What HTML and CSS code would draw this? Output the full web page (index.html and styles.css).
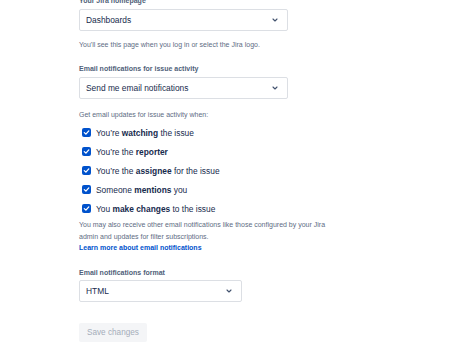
FILE: index.html
```html
<!DOCTYPE html>
<html lang="en">
<head>
    <meta charset="UTF-8">
    <title>Email preferences</title>
    <link rel="stylesheet" href="styles.css">
</head>
<body>
    <div class="form">
        <div class="field">
            <label class="field-label">Your Jira homepage</label>
            <div class="select select-wide">
                <span>Dashboards</span>
                <svg class="chevron" width="6" height="4" viewBox="0 0 6 4"><path d="M1 1 L3 3 L5 1" fill="none" stroke="#42526E" stroke-width="1.1" stroke-linecap="round" stroke-linejoin="round"/></svg>
            </div>
            <p class="helper">You'll see this page when you log in or select the Jira logo.</p>
        </div>

        <div class="field field-gap">
            <label class="field-label">Email notifications for issue activity</label>
            <div class="select select-wide">
                <span>Send me email notifications</span>
                <svg class="chevron" width="6" height="4" viewBox="0 0 6 4"><path d="M1 1 L3 3 L5 1" fill="none" stroke="#42526E" stroke-width="1.1" stroke-linecap="round" stroke-linejoin="round"/></svg>
            </div>
        </div>

        <p class="intro">Get email updates for issue activity when:</p>
        <ul class="checks">
            <li><span class="box"><svg width="9" height="9" viewBox="0 0 9 9"><path d="M2.3 4.6 L3.9 6.1 L6.8 2.9" fill="none" stroke="#fff" stroke-width="1.3" stroke-linecap="round" stroke-linejoin="round"/></svg></span><span>You’re <b>watching</b> the issue</span></li>
            <li><span class="box"><svg width="9" height="9" viewBox="0 0 9 9"><path d="M2.3 4.6 L3.9 6.1 L6.8 2.9" fill="none" stroke="#fff" stroke-width="1.3" stroke-linecap="round" stroke-linejoin="round"/></svg></span><span>You’re the <b>reporter</b></span></li>
            <li><span class="box"><svg width="9" height="9" viewBox="0 0 9 9"><path d="M2.3 4.6 L3.9 6.1 L6.8 2.9" fill="none" stroke="#fff" stroke-width="1.3" stroke-linecap="round" stroke-linejoin="round"/></svg></span><span>You’re the <b>assignee</b> for the issue</span></li>
            <li><span class="box"><svg width="9" height="9" viewBox="0 0 9 9"><path d="M2.3 4.6 L3.9 6.1 L6.8 2.9" fill="none" stroke="#fff" stroke-width="1.3" stroke-linecap="round" stroke-linejoin="round"/></svg></span><span>Someone <b>mentions</b> you</span></li>
            <li><span class="box"><svg width="9" height="9" viewBox="0 0 9 9"><path d="M2.3 4.6 L3.9 6.1 L6.8 2.9" fill="none" stroke="#fff" stroke-width="1.3" stroke-linecap="round" stroke-linejoin="round"/></svg></span><span>You <b>make changes</b> to the issue</span></li>
        </ul>

        <p class="note">You may also receive other email notifications like those configured by your Jira admin and updates for filter subscriptions.</p>
        <a class="learn" href="#">Learn more about email notifications</a>

        <div class="field field-format">
            <label class="field-label">Email notifications format</label>
            <div class="select select-narrow">
                <span>HTML</span>
                <svg class="chevron" width="6" height="4" viewBox="0 0 6 4"><path d="M1 1 L3 3 L5 1" fill="none" stroke="#42526E" stroke-width="1.1" stroke-linecap="round" stroke-linejoin="round"/></svg>
            </div>
        </div>

        <button class="save" disabled>Save changes</button>
    </div>
</body>
</html>
```

FILE: styles.css
```css
* {
    margin: 0;
    padding: 0;
    box-sizing: border-box;
}

html, body {
    width: 100%;
    height: 100%;
    overflow: hidden;
}

body {
    background-color: #ffffff;
    font-family: "Liberation Sans", Arial, sans-serif;
    color: #172B4D;
}

.form {
    margin-top: -4px;
    padding-left: 79px;
    display: flex;
    flex-direction: column;
    align-items: flex-start;
}

.field {
    display: flex;
    flex-direction: column;
}

.field-gap {
    margin-top: 14px;
}

.field-label {
    font-size: 7px;
    line-height: 9px;
    font-weight: bold;
    color: #505F79;
    margin-bottom: 4px;
}

.select {
    height: 22px;
    display: flex;
    align-items: center;
    justify-content: space-between;
    padding: 0 9px 0 6px;
    border: 1px solid #DCDFE4;
    border-radius: 2px;
    background-color: #ffffff;
    font-size: 8.4px;
}

.select-wide {
    width: 209px;
}

.select-narrow {
    width: 163px;
}

.helper {
    margin-top: 8px;
    font-size: 7px;
    line-height: 11px;
    color: #5E6C84;
}

.intro {
    margin-top: 10px;
    font-size: 7px;
    line-height: 11px;
    color: #5E6C84;
}

.checks {
    list-style: none;
    margin-top: 3px;
    padding-left: 3px;
}

.checks li {
    height: 19px;
    display: flex;
    align-items: center;
    gap: 5px;
    font-size: 8.4px;
}

.box {
    width: 9px;
    height: 9px;
    border-radius: 2px;
    background-color: #0052CC;
    display: flex;
}

.note {
    margin-top: 1px;
    max-width: 266px;
    font-size: 7px;
    line-height: 11.5px;
    color: #5E6C84;
}

.learn {
    font-size: 7px;
    line-height: 11.5px;
    font-weight: bold;
    color: #0052CC;
    text-decoration: none;
}

.field-format {
    margin-top: 14px;
}

.field-format .field-label {
    margin-bottom: 3px;
}

.save {
    margin-top: 21px;
    height: 19px;
    padding: 0 8px;
    border: none;
    border-radius: 2px;
    background-color: #F4F5F7;
    color: #A5ADBA;
    font-family: "Liberation Sans", Arial, sans-serif;
    font-size: 8.2px;
}
```
